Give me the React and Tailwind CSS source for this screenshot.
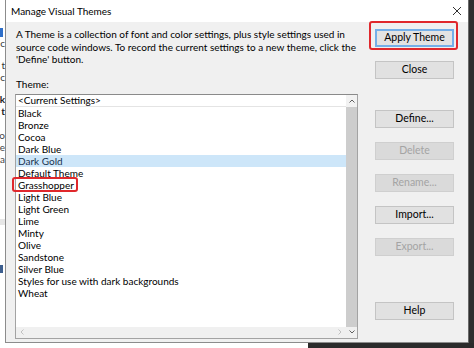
export default function App() {
  const items = [
    "<Current Settings>",
    "Black",
    "Bronze",
    "Cocoa",
    "Dark Blue",
    "Dark Gold",
    "Default Theme",
    "Grasshopper",
    "Light Blue",
    "Light Green",
    "Lime",
    "Minty",
    "Olive",
    "Sandstone",
    "Silver Blue",
    "Styles for use with dark backgrounds",
    "Wheat",
  ];
  const Btn = ({ children, disabled, primary, className = "" }) => (
    <div
      className={
        "h-[18px] w-[79px] flex items-center justify-center text-[10.5px] " +
        (primary
          ? "border-2 border-[#74afe8] bg-[#e3e3e3] text-black "
          : disabled
          ? "border border-[#cfcfcf] bg-[#dadada] text-[#a4a4a4] "
          : "border border-[#c4c4c4] bg-[#e1e1e1] text-black ") +
        className
      }
    >
      {children}
    </div>
  );
  const Frag = ({ c, cls = "text-[#444]" }) => (
    <div className={"h-[12px] leading-[12px] overflow-hidden flex justify-end " + cls}>{c}</div>
  );
  return (
    <div className="relative w-[474px] h-[348px] overflow-hidden bg-white flex flex-col font-['Lato',sans-serif] text-black">
      <div className="flex h-[343px]">
        {/* background app strip */}
        <div className="w-[5px] flex flex-col overflow-hidden bg-white text-[10px] leading-[12px]">
          <div className="h-[28px]" />
          <div className="h-[9px] w-[3px] bg-[#2f6fc9]" />
          <Frag c="c" cls="text-[#333]" />
          <div className="h-[10px]" />
          <Frag c="t" cls="text-[#333]" />
          <Frag c="c" cls="text-[#333]" />
          <div className="h-[10px]" />
          <Frag c="k" cls="text-[#222] font-bold" />
          <Frag c="t" cls="text-[#222] font-bold" />
          <div className="h-[12px]" />
          <Frag c="o" />
          <Frag c="e" />
          <Frag c="a" />
          <div className="h-[54px]" />
          <div className="h-[6px] bg-[#e6e6e6]" />
          <div className="h-[40px]" />
          <div className="h-[8px] w-[3px] bg-[#3d5f8f]" />
        </div>
        {/* dialog */}
        <div className="w-[463px] flex flex-col border-l border-b border-[#8c8c8c] bg-[#f0f0f0]">
          <div className="h-[22px] bg-white flex items-center justify-between pl-[5px] pr-[6px]">
            <span className="text-[10px]">Manage Visual Themes</span>
            <svg width="10" height="10" viewBox="0 0 10 10">
              <path d="M1 1 L9 9 M9 1 L1 9" stroke="#333" strokeWidth="1" />
            </svg>
          </div>
          <div className="flex flex-1 pl-[9px]">
            <div className="flex flex-col w-[343px]">
              <div className="pl-[1px] pt-[6px] text-[10px] leading-[12.5px] whitespace-nowrap">
                A Theme is a collection of font and color settings, plus style settings used in
                <br />
                source code windows. To record the current settings to a new theme, click the
                <br />
                'Define' button.
              </div>
              <div className="pl-[1px] mt-[12.5px] text-[10px] leading-[12.5px]">Theme:</div>
              <div className="mt-[3px] h-[245px] border border-[#a3a3a3] border-t-[#8a8a8a] bg-white flex flex-col">
                <div className="flex h-[232px]">
                  <div className="flex-1 flex flex-col">
                    {items.map((t, i) => (
                      <div
                        key={t}
                        className={
                          "h-[12px] leading-[12px] flex items-center pl-[2px] text-[10px] whitespace-nowrap " +
                          (t === "Dark Gold" ? "bg-[#cde6f9] text-[#17324f] " : "") +
                          (i === 0 ? "border-b border-[#e4e4e4]" : "")
                        }
                      >
                        {t}
                      </div>
                    ))}
                  </div>
                  <div className="w-[11px] flex flex-col">
                    <div className="h-[12px] bg-[#f2f2f2] flex items-center justify-center">
                      <svg width="6" height="4" viewBox="0 0 6 4">
                        <path d="M0.5 3.5 L3 1 L5.5 3.5" stroke="#606060" fill="none" strokeWidth="1" />
                      </svg>
                    </div>
                    <div className="flex-1 bg-[#cdcdcd]" />
                  </div>
                </div>
                <div className="flex h-[11px] bg-[#f0f0f0]">
                  <div className="flex-1 flex items-center justify-between px-[4px]">
                    <svg width="4" height="6" viewBox="0 0 4 6">
                      <path d="M3.5 0.5 L1 3 L3.5 5.5" stroke="#c0c0c0" fill="none" strokeWidth="1" />
                    </svg>
                    <svg width="4" height="6" viewBox="0 0 4 6">
                      <path d="M0.5 0.5 L3 3 L0.5 5.5" stroke="#c0c0c0" fill="none" strokeWidth="1" />
                    </svg>
                  </div>
                  <div className="w-[11px] flex items-center justify-center">
                    <svg width="6" height="4" viewBox="0 0 6 4">
                      <path d="M0.5 0.5 L3 3 L5.5 0.5" stroke="#606060" fill="none" strokeWidth="1" />
                    </svg>
                  </div>
                </div>
              </div>
            </div>
            <div className="ml-[17px] flex flex-col pt-[7px]">
              <Btn primary>Apply Theme</Btn>
              <Btn className="mt-[14px]">Close</Btn>
              <Btn className="mt-[31px]">Define...</Btn>
              <Btn className="mt-[14px]" disabled>Delete</Btn>
              <Btn className="mt-[14px]" disabled>Rename...</Btn>
              <Btn className="mt-[14px]">Import...</Btn>
              <Btn className="mt-[14px]" disabled>Export...</Btn>
              <Btn className="mt-[46px]">Help</Btn>
            </div>
          </div>
        </div>
        <div className="flex-1 bg-[#2e2e2e] border-l border-[#6a6a6a]" />
      </div>
      <div className="flex h-[5px]">
        <div className="w-[308px] bg-white" />
        <div className="flex-1 bg-[#2b2b2b]" />
      </div>
      {/* annotations */}
      <div className="absolute left-[12px] top-[177px] w-[66px] h-[15px] border-2 border-[#e0282c] rounded-[3px]" />
      <div className="absolute left-[369px] top-[21px] w-[89px] h-[29px] border-2 border-[#e0282c] rounded-[3px]" />
    </div>
  );
}
